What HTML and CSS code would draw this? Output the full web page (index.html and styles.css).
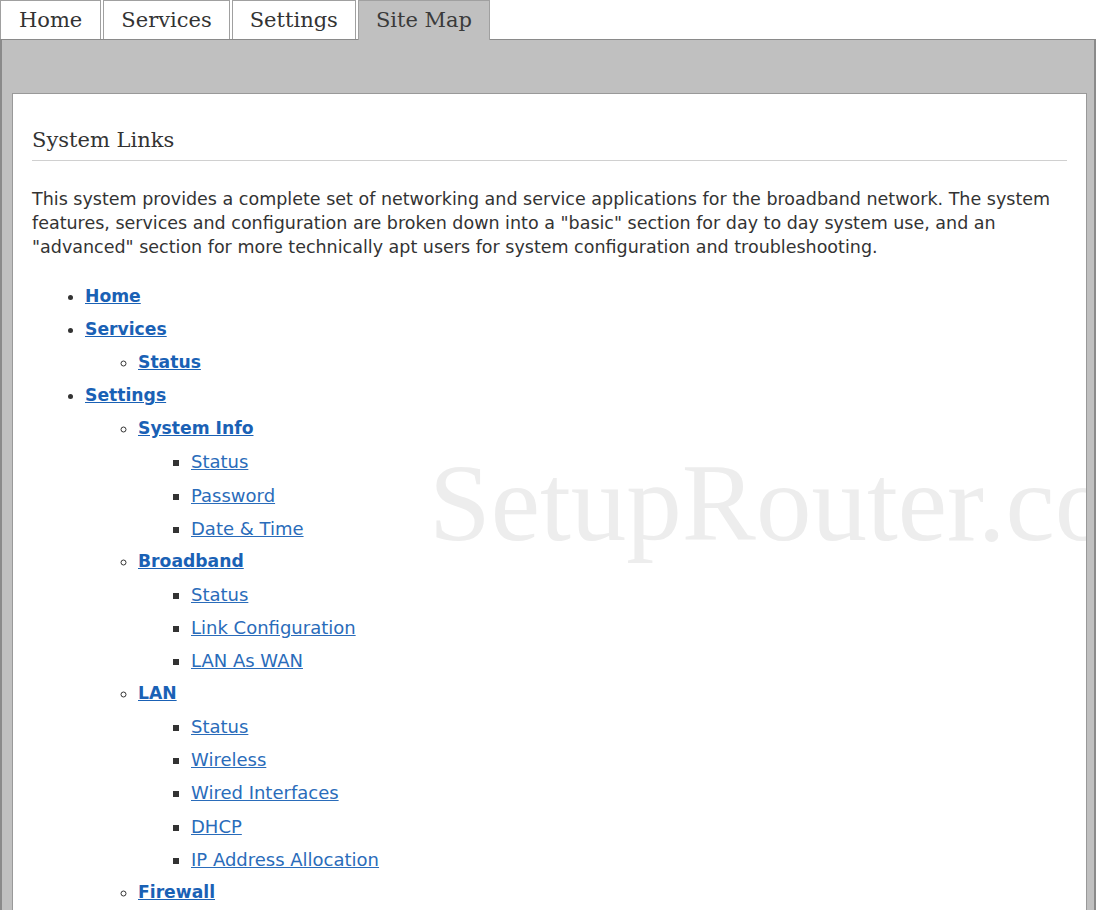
FILE: index.html
```html
<!DOCTYPE html>
<html lang="en">
  <head>
    <meta charset="UTF-8" />
    <title>Site Map</title>
    <link rel="stylesheet" href="styles.css">
  </head>
  <body>
    <nav class="tabs">
      <a class="tab" href="#">Home</a>
      <a class="tab" href="#">Services</a>
      <a class="tab" href="#">Settings</a>
      <a class="tab tab--active" href="#">Site Map</a>
    </nav>

    <div class="frame">
      <section class="panel">
        <div class="watermark">SetupRouter.com</div>

        <h2 class="panel__title">System Links</h2>
        <p class="panel__text">
          This system provides a complete set of networking and service
          applications for the broadband network. The system features, services
          and configuration are broken down into a "basic" section for day to
          day system use, and an "advanced" section for more technically apt
          users for system configuration and troubleshooting.
        </p>

        <ul class="sitemap">
          <li><a href="#">Home</a></li>
          <li>
            <a href="#">Services</a>
            <ul>
              <li><a href="#">Status</a></li>
            </ul>
          </li>
          <li>
            <a href="#">Settings</a>
            <ul>
              <li>
                <a href="#">System Info</a>
                <ul>
                  <li><a href="#">Status</a></li>
                  <li><a href="#">Password</a></li>
                  <li><a href="#">Date &amp; Time</a></li>
                </ul>
              </li>
              <li>
                <a href="#">Broadband</a>
                <ul>
                  <li><a href="#">Status</a></li>
                  <li><a href="#">Link Configuration</a></li>
                  <li><a href="#">LAN As WAN</a></li>
                </ul>
              </li>
              <li>
                <a href="#">LAN</a>
                <ul>
                  <li><a href="#">Status</a></li>
                  <li><a href="#">Wireless</a></li>
                  <li><a href="#">Wired Interfaces</a></li>
                  <li><a href="#">DHCP</a></li>
                  <li><a href="#">IP Address Allocation</a></li>
                </ul>
              </li>
              <li>
                <a href="#">Firewall</a>
                <ul>
                  <li><a href="#">Status</a></li>
                  <li><a href="#">Port Forwarding</a></li>
                </ul>
              </li>
            </ul>
          </li>
        </ul>
      </section>
    </div>
  </body>
</html>
```

FILE: styles.css
```css
html,
body {
  margin: 0;
  background: #fff;
  font-family: "DejaVu Sans", Verdana, sans-serif;
  color: #333;
}

.tabs {
  display: flex;
  gap: 2px;
  height: 39px;
}

.tab {
  display: block;
  box-sizing: border-box;
  height: 39px;
  padding: 0 17px;
  border: 1px solid #a0a0a0;
  border-bottom: none;
  background: #fff;
  color: #333;
  font-family: "DejaVu Serif", Georgia, serif;
  font-size: 21px;
  line-height: 38px;
  text-decoration: none;
}

.tab:first-child {
  padding-left: 18px;
  padding-right: 18px;
}

.tab--active {
  position: relative;
  margin-bottom: -1px;
  height: 40px;
  background: #c0c0c0;
  color: #3a3a3a;
}

.frame {
  box-sizing: border-box;
  width: 1096px;
  padding: 53px 7px 0 10px;
  border-top: 1px solid #8a8a8a;
  border-left: 2px solid #8a8a8a;
  border-right: 2px solid #8a8a8a;
  background: #c0c0c0;
}

.panel {
  position: relative;
  overflow: hidden;
  height: 860px;
  padding: 0 19px;
  border: 1px solid #999;
  background: #fff;
}

.watermark {
  position: absolute;
  left: 416px;
  top: 353px;
  font-family: "Liberation Serif", "Times New Roman", serif;
  font-size: 111px;
  line-height: 1;
  color: #ededed;
  white-space: nowrap;
  pointer-events: none;
}

.panel__title {
  position: relative;
  margin: 33px 0 0;
  padding-bottom: 7px;
  border-bottom: 1px solid #d0d0d0;
  font-family: "DejaVu Serif", Georgia, serif;
  font-size: 21px;
  font-weight: normal;
  line-height: 26px;
  color: #333;
}

.panel__text {
  position: relative;
  margin: 26px 0 21px;
  font-size: 17.5px;
  line-height: 24px;
}

.sitemap,
.sitemap ul {
  margin: 0;
  padding-left: 53px;
}

.sitemap li {
  line-height: 33.1px;
  font-size: 17.2px;
}

.sitemap li::marker {
  color: #333;
}

.sitemap a {
  color: #1a61b5;
  font-weight: bold;
}

.sitemap ul ul li {
  font-size: 18px;
}

.sitemap ul ul a {
  color: #2a6cba;
  font-weight: normal;
}
```
